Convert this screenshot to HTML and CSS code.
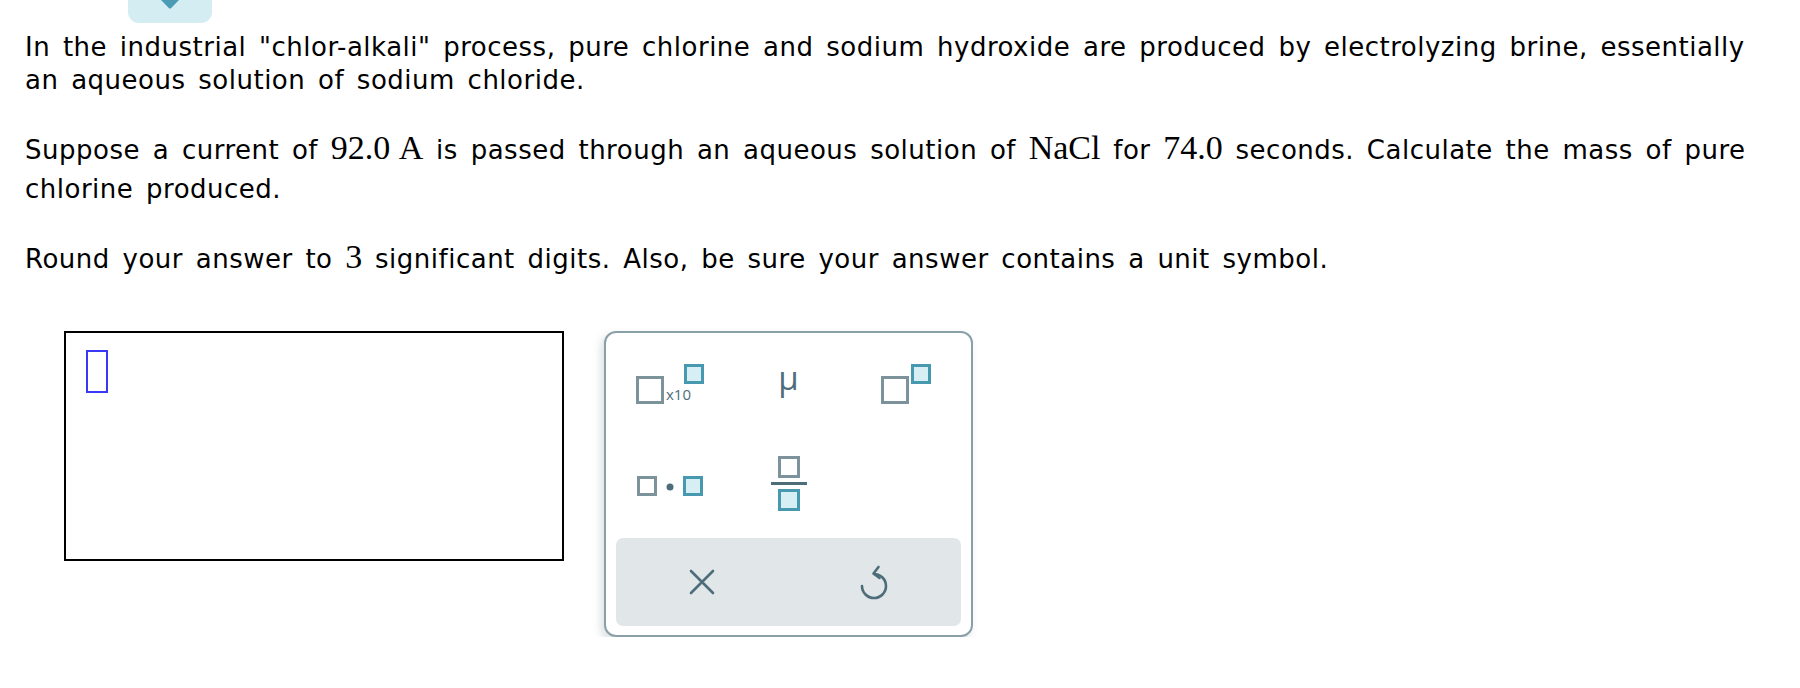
FILE: index.html
```html
<!DOCTYPE html>
<html lang="en">
<head>
<meta charset="utf-8">
<title>Chlor-alkali question</title>
<link rel="stylesheet" href="styles.css">
</head>
<body>
<div class="page">
  <div class="tab">
    <svg class="tab-arrow" width="20" height="10" viewBox="0 0 20 10"><path d="M1 0 L19 0 L11.2 8 Q10 9.2 8.8 8 Z" fill="#4a9bb4"/></svg>
  </div>
  <div class="question">
    <p class="p-intro">In the industrial "chlor-alkali" process, pure chlorine and sodium hydroxide are produced by electrolyzing brine, essentially<br>an aqueous solution of sodium chloride.</p>
    <p class="p-math p-task">Suppose a current of <span class="math">92.0&nbsp;A</span> is passed through an aqueous solution of <span class="math">NaCl</span> for <span class="math">74.0</span> seconds. Calculate the mass of pure<br>chlorine produced.</p>
    <p class="p-math p-last">Round your answer to <span class="math">3</span> significant digits. Also, be sure your answer contains a unit symbol.</p>
  </div>
  <div class="answer">
    <div class="input"><span class="cursor"></span></div>
    <div class="keypad">
      <div class="keys">
        <button class="key key-sci" aria-label="scientific notation">
          <svg width="68" height="40" viewBox="0 0 68 40">
            <rect x="1.5" y="13.5" width="25" height="25" class="sq-grey"/>
            <text x="30" y="36" class="x10">x10</text>
            <rect x="49.5" y="1.5" width="17" height="17" class="sq-blue"/>
          </svg>
        </button>
        <button class="key key-mu">μ</button>
        <button class="key key-sup" aria-label="superscript">
          <svg width="50" height="40" viewBox="0 0 50 40">
            <rect x="1.5" y="13.5" width="25" height="25" class="sq-grey"/>
            <rect x="31.5" y="1.5" width="17" height="17" class="sq-blue"/>
          </svg>
        </button>
        <button class="key key-dot" aria-label="multiply">
          <svg width="66" height="20" viewBox="0 0 66 20">
            <rect x="1.5" y="1.5" width="17" height="17" class="sq-grey"/>
            <circle cx="33" cy="11" r="3.5" fill="#4e6d7a"/>
            <rect x="47.5" y="1.5" width="17" height="17" class="sq-blue"/>
          </svg>
        </button>
        <button class="key key-frac" aria-label="fraction">
          <svg width="36" height="56" viewBox="0 0 36 56">
            <rect x="8.5" y="1.5" width="19" height="19" class="sq-grey"/>
            <rect x="0" y="26" width="36" height="3" fill="#4e6d7a"/>
            <rect x="8.5" y="34.5" width="19" height="19" class="sq-blue"/>
          </svg>
        </button>
        <div class="key key-empty"></div>
      </div>
      <div class="footer">
        <button class="fbtn" aria-label="clear">
          <svg width="26" height="26" viewBox="0 0 26 26"><path d="M2 2 L24 24 M24 2 L2 24" class="ico"/></svg>
        </button>
        <button class="fbtn" aria-label="undo">
          <svg width="30" height="38" viewBox="0 0 30 38"><path d="M14 11 A12 12 0 1 1 2 23" class="ico"/><path d="M18.5 4 L13.5 10.5 L19.5 15" class="ico"/></svg>
        </button>
      </div>
    </div>
  </div>
</div>
</body>
</html>
```

FILE: styles.css
```css
html, body {
  margin: 0;
  background: #ffffff;
}

body {
  font-family: "DejaVu Sans", Verdana, sans-serif;
  color: #000000;
}

.page {
  padding-left: 25px;
}

.tab {
  margin-left: 103px;
  width: 84px;
  height: 23px;
  background: #d4edf3;
  border-radius: 0 0 11px 11px;
  display: flex;
  justify-content: center;
  align-items: flex-start;
}

.tab-arrow {
  display: block;
}

.question {
  margin-top: 8px;
  width: 1770px;
  font-size: 26px;
  letter-spacing: 0.5px;
  word-spacing: 4px;
  line-height: 33px;
}

.question p {
  margin: 0;
}

.p-intro {
  margin-bottom: 34px !important;
}

.p-task {
  margin-bottom: 31px !important;
}

.p-math {
  line-height: 39px;
}

.math {
  font-family: "Liberation Serif", "Times New Roman", serif;
  font-size: 34px;
  letter-spacing: 0;
  word-spacing: 0;
  line-height: 24px;
}

.answer {
  display: flex;
  align-items: flex-start;
  gap: 40px;
  margin-top: 52px;
  padding-left: 39px;
}

.input {
  box-sizing: border-box;
  width: 500px;
  height: 230px;
  border: 2px solid #000;
  padding: 17px 0 0 20px;
}

.cursor {
  display: block;
  box-sizing: border-box;
  width: 22px;
  height: 43px;
  border: 2px solid #3838f5;
}

.keypad {
  box-sizing: border-box;
  width: 369px;
  height: 306px;
  border: 2px solid #8aa0a8;
  border-radius: 12px;
  padding: 15px 10px 9px 10px;
  background: #fff;
  box-shadow: -3px 4px 9px rgba(60, 80, 90, 0.18);
}

.keys {
  display: grid;
  grid-template-columns: repeat(3, 1fr);
  grid-template-rows: 72px 72px;
  row-gap: 28px;
  margin-bottom: 18px;
}

.key {
  border: 0;
  background: transparent;
  padding: 0;
  margin: 0;
  display: flex;
  align-items: center;
  justify-content: center;
  cursor: pointer;
}

.key svg {
  display: block;
  overflow: visible;
}

.key-sci svg {
  margin-right: 8px;
}

.key-mu {
  font-family: "Open Sans", "DejaVu Sans", sans-serif;
  font-size: 33px;
  color: #4e6d7a;
  line-height: 1;
  padding-bottom: 13px;
}

.key-sup svg {
  margin-left: 4px;
}

.key-dot svg {
  margin-right: 8px;
  margin-top: 3px;
}

.sq-grey {
  fill: #ffffff;
  stroke: #7d939c;
  stroke-width: 3;
}

.sq-blue {
  fill: #d6eef4;
  stroke: #4799b0;
  stroke-width: 3;
}

.x10 {
  font-family: "Open Sans", "DejaVu Sans", sans-serif;
  font-size: 15px;
  fill: #4e6d7a;
}

.footer {
  display: grid;
  grid-template-columns: 1fr 1fr;
  height: 88px;
  background: #e1e6e9;
  border-radius: 7px;
}

.fbtn {
  border: 0;
  background: transparent;
  padding: 0;
  display: flex;
  align-items: center;
  justify-content: center;
  cursor: pointer;
}

.fbtn svg {
  display: block;
}

.ico {
  fill: none;
  stroke: #4e6d7a;
  stroke-width: 2.6;
  stroke-linecap: round;
  stroke-linejoin: round;
}
```
